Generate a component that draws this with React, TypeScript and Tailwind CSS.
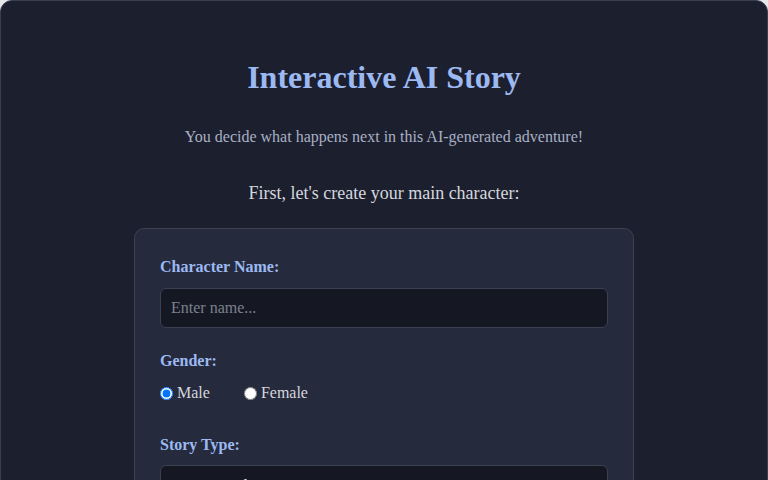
import React from "react";

export default function App() {
  return (
    <div className="w-[768px] h-[480px] overflow-hidden bg-[#e5e7eb]" style={{ fontFamily: '"Liberation Serif", "Times New Roman", serif' }}>
      <div className="min-h-[600px] w-full rounded-[12px] border border-[#3b3e4f] bg-[#1c1f2e] flex flex-col items-center">
        <h1 className="mt-[56px] text-[32px] leading-[40px] font-bold text-[#9cb9f2]">Interactive AI Story</h1>
        <p className="mt-[31px] text-[16px] leading-[18px] text-[#a8b0c4]">You decide what happens next in this AI-generated adventure!</p>
        <p className="mt-[35px] text-[18px] leading-[24px] text-[#d4d7de]">First, let's create your main character:</p>
        <div className="mt-[23px] w-[500px] rounded-[10px] border border-[#3b4053] bg-[#252a3c] px-[25px] pt-[29px] pb-[30px]">
          <label className="block text-[16px] leading-[18px] font-bold text-[#9cb9f2]">Character Name:</label>
          <input
            type="text"
            placeholder="Enter name..."
            className="mt-[12px] block w-full h-[40px] rounded-[6px] border border-[#3b4053] bg-[#151823] px-[10px] text-[16px] text-gray-200 placeholder:text-[#7c808c] outline-none"
            style={{ fontFamily: '"Liberation Serif", "Times New Roman", serif' }}
          />
          <label className="mt-[24px] block text-[16px] leading-[18px] font-bold text-[#9cb9f2]">Gender:</label>
          <div className="mt-[14px] flex items-center h-[18px] text-[16px] text-[#d4d7de]">
            <label className="flex items-center gap-[4px] mr-[34px]">
              <input type="radio" name="g" defaultChecked className="w-[13px] h-[13px]" />
              <span>Male</span>
            </label>
            <label className="flex items-center gap-[4px]">
              <input type="radio" name="g" className="w-[13px] h-[13px]" />
              <span>Female</span>
            </label>
          </div>
          <label className="mt-[34px] block text-[16px] leading-[18px] font-bold text-[#9cb9f2]">Story Type:</label>
          <select
            className="mt-[11px] block w-full h-[40px] rounded-[6px] border border-[#3b4053] bg-[#151823] px-[10px] text-[16px] text-gray-200 outline-none"
            style={{ fontFamily: '"Liberation Serif", "Times New Roman", serif' }}
          >
            <option>Fantasy Adventure</option>
            <option>Sci-Fi</option>
            <option>Mystery</option>
          </select>
        </div>
      </div>
    </div>
  );
}
